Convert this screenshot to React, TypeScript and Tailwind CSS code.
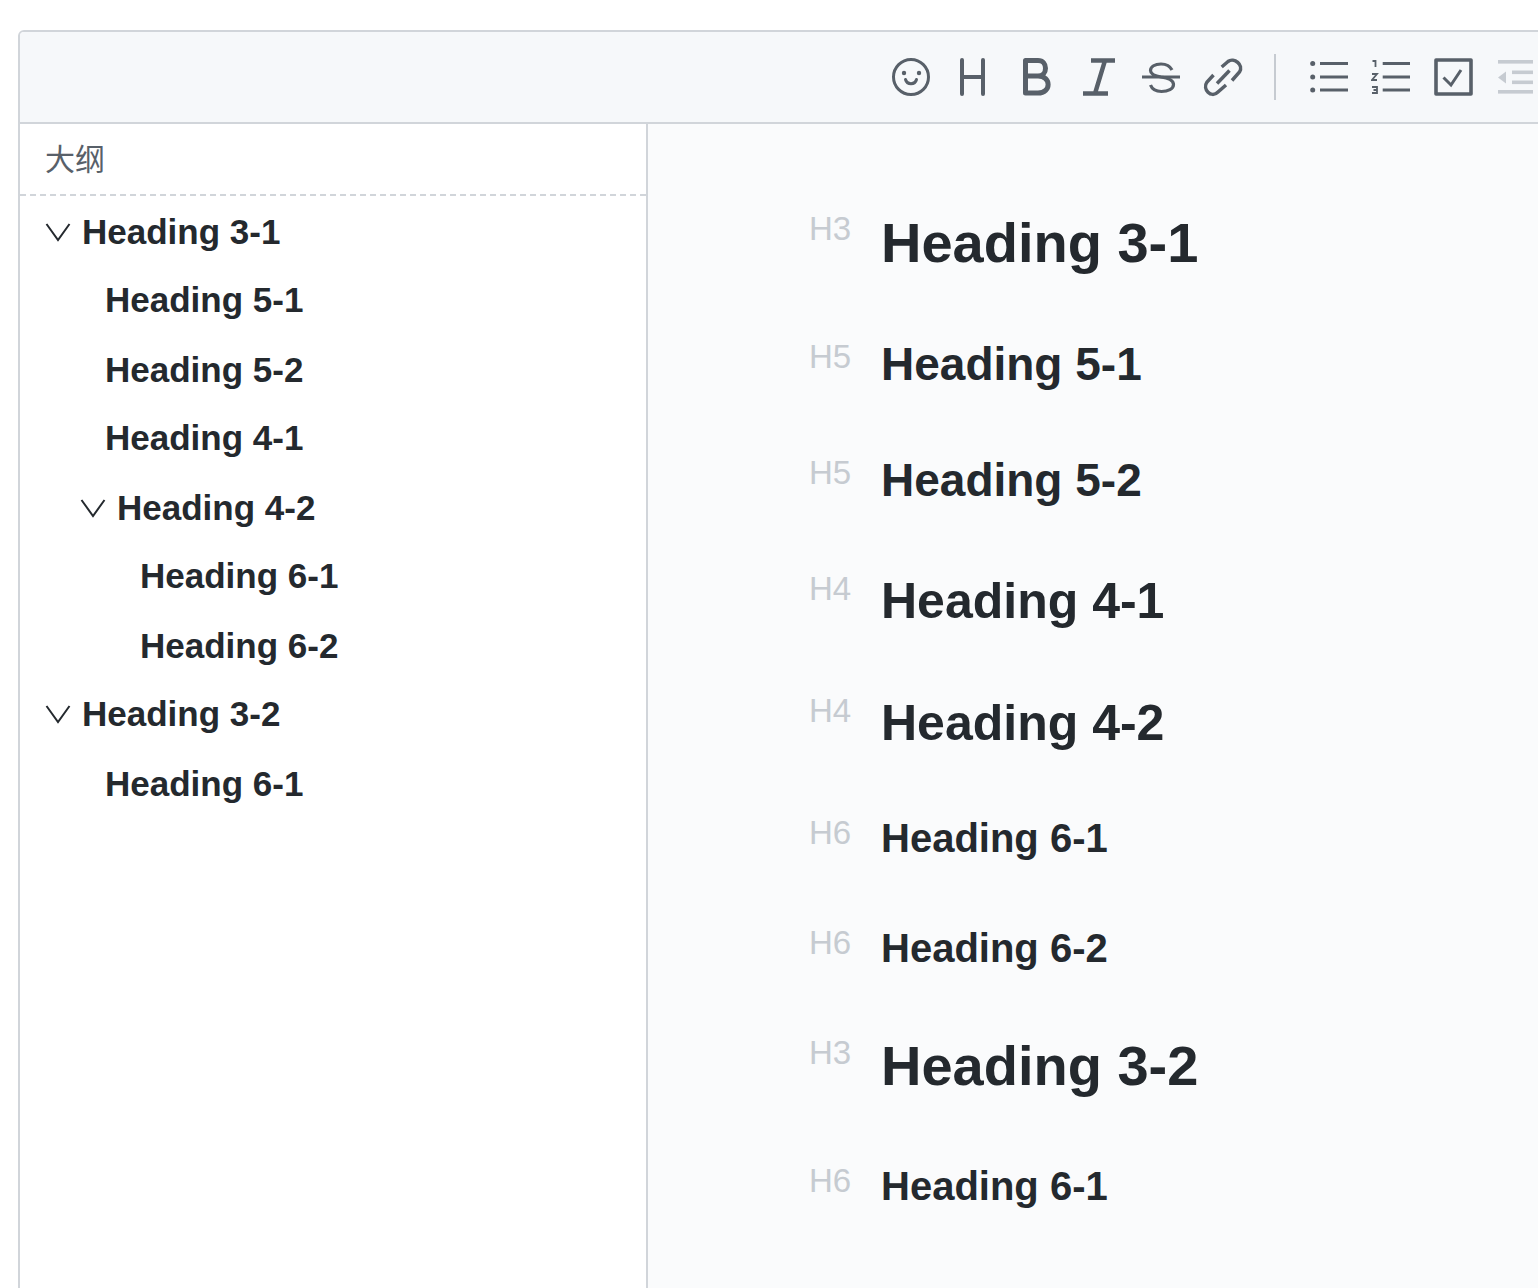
const font = { fontFamily: '"Liberation Sans", "Noto Sans CJK SC", sans-serif' };

function Chevron() {
  return (
    <svg viewBox="0 0 26 20" className="h-5 w-[26px] shrink-0" fill="none" stroke="#24292e" strokeWidth="2">
      <path d="M1.5 2 L13 18 L24.5 2" />
    </svg>
  );
}

function ToolbarIcons() {
  return (
    <div className="flex h-full items-center pl-[871px]">
      {/* emoji */}
      <svg viewBox="0 0 40 40" className="h-10 w-10 shrink-0" fill="none" stroke="#586069" strokeWidth="3">
        <circle cx="20" cy="20" r="17.5" />
        <circle cx="13" cy="16" r="2.2" fill="#586069" stroke="none" />
        <circle cx="28" cy="16" r="2.2" fill="#586069" stroke="none" />
        <path d="M14.5 22.5 C16 28 24 28 25.5 22.5" strokeLinecap="round" />
      </svg>
      {/* heading */}
      <svg viewBox="0 0 40 40" className="ml-[22.4px] h-10 w-10 shrink-0" fill="none" stroke="#586069" strokeWidth="4" strokeLinecap="round">
        <path d="M9 3 V37 M30 3 V37 M9 20 H30" />
      </svg>
      {/* bold */}
      <svg viewBox="0 0 40 40" className="ml-[22.4px] h-10 w-10 shrink-0" fill="none" stroke="#586069" strokeWidth="5" strokeLinejoin="round">
        <path d="M9.5 3.5 H22 C32 3.5 32 19 22 19 H9.5 Z M22 19 C35.5 19 35.5 36 22 36 H9.5 V19" />
      </svg>
      {/* italic */}
      <svg viewBox="0 0 40 40" className="ml-[22.4px] h-10 w-10 shrink-0" fill="none" stroke="#586069" strokeWidth="4.4">
        <path d="M13 3.5 H37 M5 36.5 H30 M27 3.5 L17 36.5" />
      </svg>
      {/* strike */}
      <svg viewBox="0 0 40 40" className="ml-[22.4px] h-10 w-10 shrink-0" fill="none" stroke="#586069" strokeWidth="3.2">
        <path d="M1 20 H39" />
        <path d="M31 13 C29 9 25 7 20 7 C14 7 9.5 9.5 9.5 13.5 C9.5 17 14 19 20 20 C27 21 32.5 23 32.5 27.5 C32.5 32 27 34.5 20.5 34.5 C15 34.5 11 32 9.5 28" />
      </svg>
      {/* link */}
      <svg viewBox="0 0 40 40" className="ml-[22.4px] h-10 w-10 shrink-0" fill="none" stroke="#586069" strokeWidth="3.5">
        <path d="M18.7 10 L25 4.5 C31 0 41 8 36.5 15 L29 23.5" />
        <path d="M10.5 18 L4 25 C-1 32 8 42 15 35 L23 28" />
        <path d="M14 26.5 L26.5 13.5" />
      </svg>
      <div className="ml-[31px] h-[46px] w-[2px] shrink-0 bg-[#c6cbd1]" />
      {/* list */}
      <svg viewBox="0 0 40 40" className="ml-[33px] h-10 w-10 shrink-0" fill="#586069">
        <circle cx="3.7" cy="6.5" r="2.5" />
        <circle cx="3.7" cy="20" r="2.5" />
        <circle cx="3.7" cy="33" r="2.5" />
        <rect x="11" y="5" width="28" height="3" />
        <rect x="11" y="18.5" width="28" height="3" />
        <rect x="11" y="31.5" width="28" height="3" />
      </svg>
      {/* ordered list */}
      <svg viewBox="0 0 40 40" className="ml-[22px] h-10 w-10 shrink-0" fill="none" stroke="#586069">
        <path d="M11.7 6.5 H39 M11.7 20 H39 M11.7 33 H39" strokeWidth="3" />
        <path d="M1.5 4 H4.5 V10" strokeWidth="1.8" />
        <path d="M1 17 H6 L1 23 H6" strokeWidth="1.8" />
        <path d="M1 30 H6 V36 H1 M2.5 33 H6" strokeWidth="1.8" />
      </svg>
      {/* check */}
      <svg viewBox="0 0 40 40" className="ml-[22px] h-10 w-10 shrink-0" fill="none" stroke="#586069">
        <rect x="3" y="3" width="35" height="34" strokeWidth="3.6" strokeLinejoin="round" />
        <path d="M10.5 20.5 L18 28 L28 13" strokeWidth="3" />
      </svg>
      {/* outdent */}
      <svg viewBox="0 0 40 40" className="ml-[24px] h-10 w-10 shrink-0" fill="#c6cbd1">
        <rect x="1" y="3" width="35" height="3.6" />
        <rect x="15" y="13.5" width="21" height="3.6" />
        <rect x="15" y="23.5" width="21" height="3.6" />
        <rect x="1" y="33" width="35" height="3.6" />
        <path d="M1 20.5 L9 14.5 V26.5 Z" />
      </svg>
    </div>
  );
}

const outline = [
  { label: "Heading 3-1", left: 25, arrow: true, mt: 0 },
  { label: "Heading 5-1", left: 85, mt: 0 },
  { label: "Heading 5-2", left: 85, mt: 2 },
  { label: "Heading 4-1", left: 85, mt: 0 },
  { label: "Heading 4-2", left: 60, arrow: true, mt: 2 },
  { label: "Heading 6-1", left: 120, mt: 0 },
  { label: "Heading 6-2", left: 120, mt: 2 },
  { label: "Heading 3-2", left: 25, arrow: true, mt: 0 },
  { label: "Heading 6-1", left: 85, mt: 2 },
];

const headings = [
  { tag: "H3", text: "Heading 3-1", size: "text-[56px]", h: "h-[70px]", mt: "mt-[84px]", tagMt: "mt-[1px]" },
  { tag: "H5", text: "Heading 5-1", size: "text-[46px]", h: "h-[58px]", mt: "mt-[57px]", tagMt: "mt-[2px]" },
  { tag: "H5", text: "Heading 5-2", size: "text-[46px]", h: "h-[58px]", mt: "mt-[58px]", tagMt: "mt-[2px]" },
  { tag: "H4", text: "Heading 4-1", size: "text-[50px]", h: "h-[64px]", mt: "mt-[60px]", tagMt: "mt-0" },
  { tag: "H4", text: "Heading 4-2", size: "text-[50px]", h: "h-[64px]", mt: "mt-[58px]", tagMt: "mt-0" },
  { tag: "H6", text: "Heading 6-1", size: "text-[40px]", h: "h-[50px]", mt: "mt-[58px]", tagMt: "mt-0" },
  { tag: "H6", text: "Heading 6-2", size: "text-[40px]", h: "h-[50px]", mt: "mt-[60px]", tagMt: "mt-0" },
  { tag: "H3", text: "Heading 3-2", size: "text-[56px]", h: "h-[70px]", mt: "mt-[58px]", tagMt: "mt-[2px]" },
  { tag: "H6", text: "Heading 6-1", size: "text-[40px]", h: "h-[50px]", mt: "mt-[60px]", tagMt: "mt-0" },
];

export default function App() {
  return (
    <div className="h-[1288px] overflow-hidden bg-white pl-[18px] pt-[30px]" style={font}>
      <div className="flex h-[1300px] w-[1560px] flex-col rounded-tl-[6px] border-2 border-[#d1d5da]">
        <div className="h-[92px] shrink-0 overflow-hidden rounded-tl-[4px] border-b-2 border-[#d1d5da] bg-[#f6f8fa]">
          <ToolbarIcons />
        </div>
        <div className="flex flex-1">
          <aside className="w-[628px] shrink-0 border-r-2 border-[#d1d5da] bg-white">
            <div className="flex h-[72px] items-center border-b-2 border-dashed border-[#d1d5da] pl-[25px] text-[30px] text-[#586069]">
              大纲
            </div>
            <ul className="pt-[2px]">
              {outline.map((item, i) => (
                <li
                  key={i}
                  className="flex h-[68px] items-center gap-[11px] text-[35px] font-bold text-[#24292e]"
                  style={{ marginTop: item.mt, paddingLeft: item.left }}
                >
                  {item.arrow && <Chevron />}
                  {item.label}
                </li>
              ))}
            </ul>
          </aside>
          <main className="flex-1 bg-[#fafbfc] pl-[160px]">
            {headings.map((row, i) => (
              <div key={i} className={`flex ${row.h} ${row.mt}`}>
                <span className={`ml-[1px] w-[72px] shrink-0 text-[33px] leading-[40px] text-[#c6cbd1] ${row.tagMt}`}>{row.tag}</span>
                <span className={`${row.size} flex h-full items-center font-bold leading-none text-[#24292e]`}>{row.text}</span>
              </div>
            ))}
          </main>
        </div>
      </div>
    </div>
  );
}
